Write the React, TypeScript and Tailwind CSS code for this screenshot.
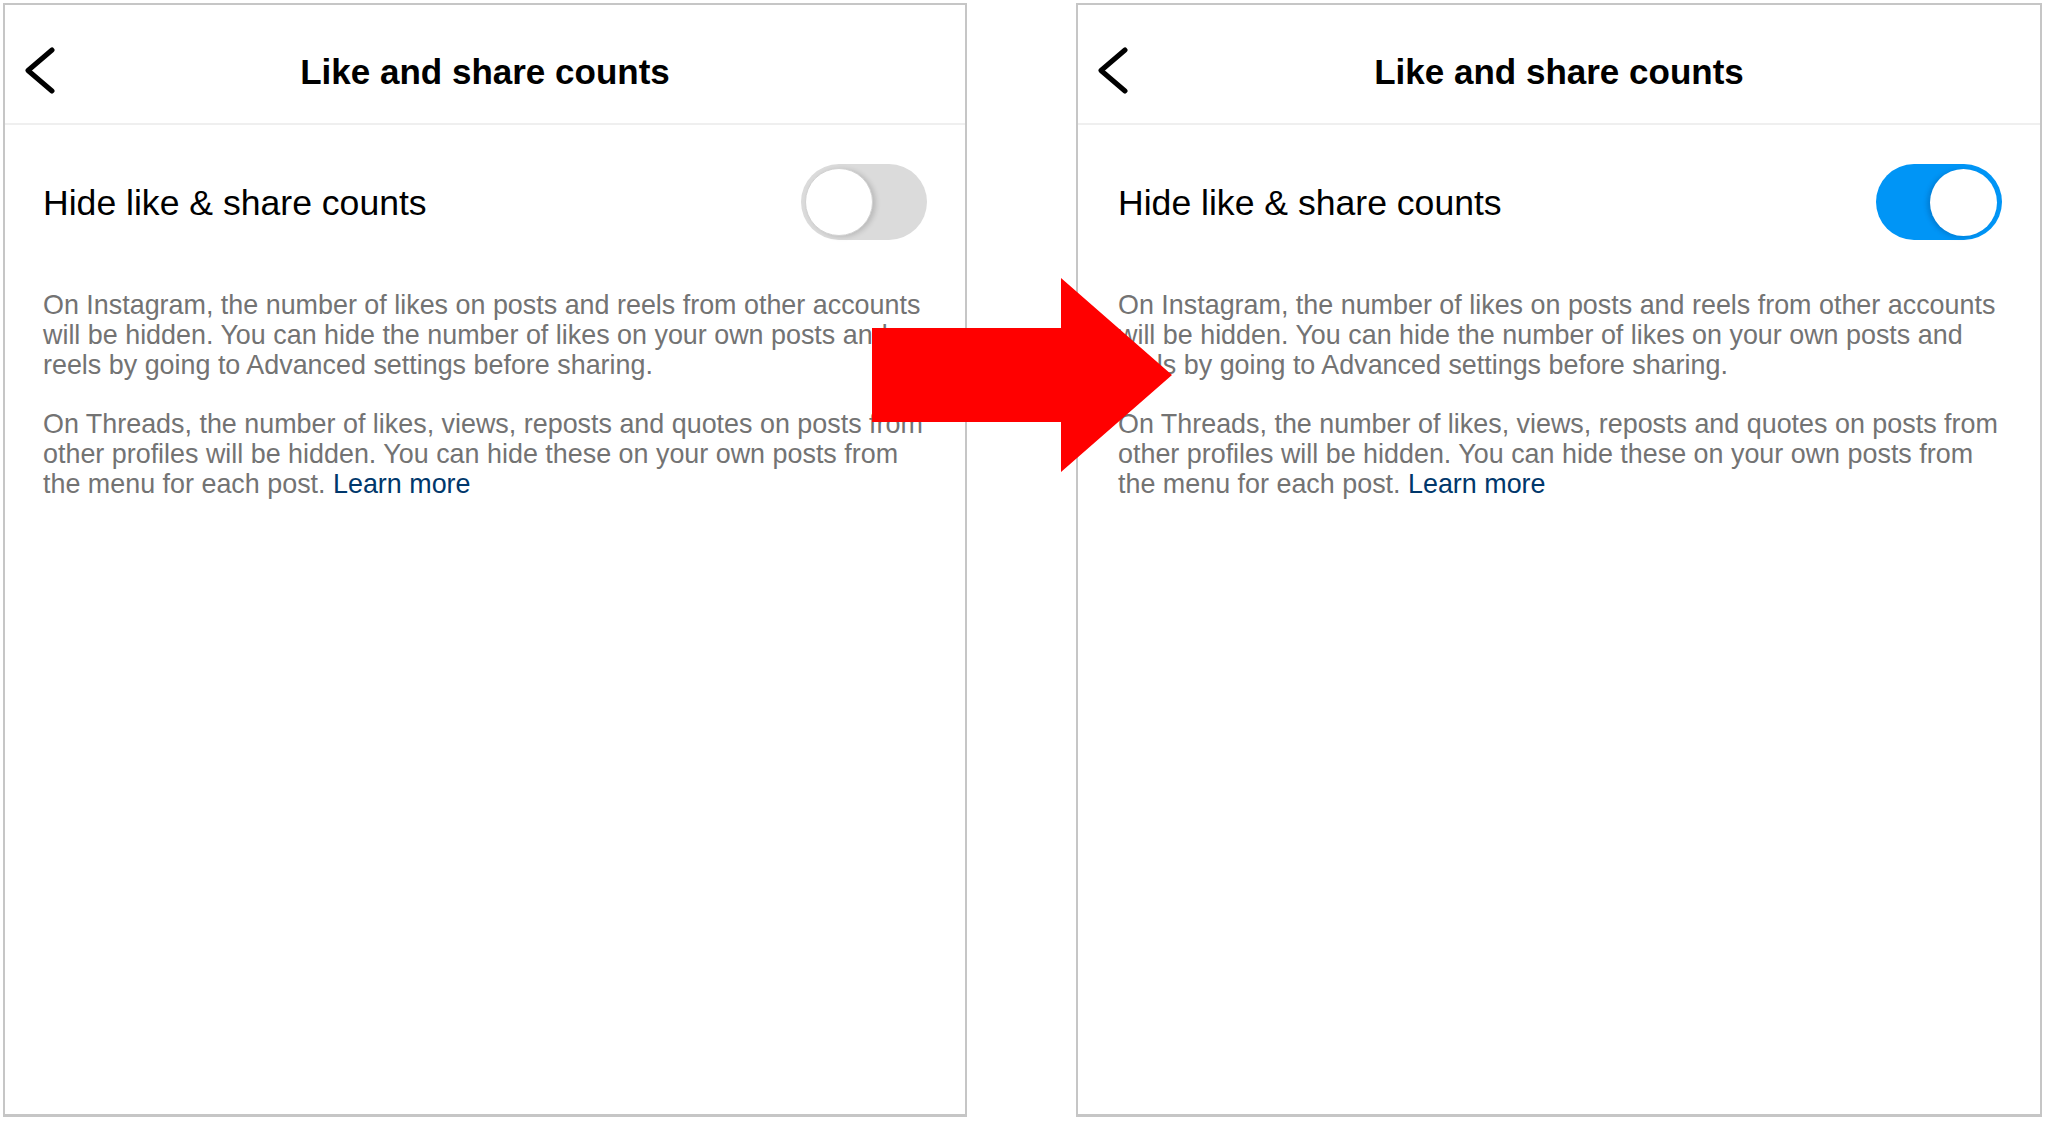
import React from "react";

const Toggle: React.FC<{ on: boolean }> = ({ on }) => {
  if (on) {
    return (
      <div className="w-[126px] h-[76px] rounded-full bg-[#0095f6] flex items-center justify-end pr-[5px] shrink-0">
        <div className="w-[67px] h-[67px] rounded-full bg-white shadow-[-3px_1px_4px_rgba(0,60,120,0.25)]" />
      </div>
    );
  }
  return (
    <div className="w-[126px] h-[76px] rounded-full bg-[#dbdbdb] flex items-center pl-[4px] shrink-0">
      <div className="w-[68px] h-[68px] rounded-full bg-white border border-[#d2d2d2] shadow-[3px_1px_5px_rgba(0,0,0,0.15)]" />
    </div>
  );
};

const Panel: React.FC<{ on: boolean; width: string; padLeft: string }> = ({ on, width, padLeft }) => (
  <div className={`${width} h-[1114px] border-2 border-b-[3px] border-[#c6c6c6] bg-white flex flex-col`}>
    {/* Header */}
    <div className="h-[120px] pt-[14px] grid grid-cols-[1fr_auto_1fr] items-center border-b-2 border-[#efefef]">
      <div className="pl-[19px] flex items-center">
        <svg width="32" height="48" viewBox="0 0 32 48" fill="none">
          <path d="M28 3 L4 23.5 L28 44" stroke="#000" strokeWidth="5" strokeLinecap="round" strokeLinejoin="round" />
        </svg>
      </div>
      <h1 className="text-[35px] font-bold text-black leading-none">Like and share counts</h1>
      <div />
    </div>

    {/* Toggle row */}
    <div className={`pt-[39px] ${padLeft} pr-[38px] flex items-center justify-between`}>
      <span className="pt-[3px] text-[35.6px] text-black leading-none">Hide like &amp; share counts</span>
      <Toggle on={on} />
    </div>

    {/* Description */}
    <div className={`${padLeft} pr-[38px] pt-[50px] text-[26.9px] leading-[30px] text-[#737373] whitespace-nowrap`}>
      <p>
        On Instagram, the number of likes on posts and reels from other accounts
        <br />
        will be hidden. You can hide the number of likes on your own posts and
        <br />
        reels by going to Advanced settings before sharing.
      </p>
      <p className="mt-[29px]">
        On Threads, the number of likes, views, reposts and quotes on posts from
        <br />
        other profiles will be hidden. You can hide these on your own posts from
        <br />
        the menu for each post. <span className="text-[#00376b]">Learn more</span>
      </p>
    </div>
  </div>
);

export default function App() {
  return (
    <div
      className="relative w-[2048px] h-[1122px] bg-white overflow-hidden flex gap-[109px] pl-[3px] pt-[3px]"
      style={{ fontFamily: '"Liberation Sans", Arial, sans-serif' }}
    >
      <Panel on={false} width="w-[964px]" padLeft="pl-[38px]" />
      <Panel on={true} width="w-[966px]" padLeft="pl-[40px]" />

      {/* red arrow overlay */}
      <svg className="absolute left-[872px] top-[278px]" width="300" height="194" viewBox="0 0 300 194">
        <polygon points="0,50 189,50 189,0 300,97 189,194 189,144 0,144" fill="#ff0000" />
      </svg>
    </div>
  );
}
